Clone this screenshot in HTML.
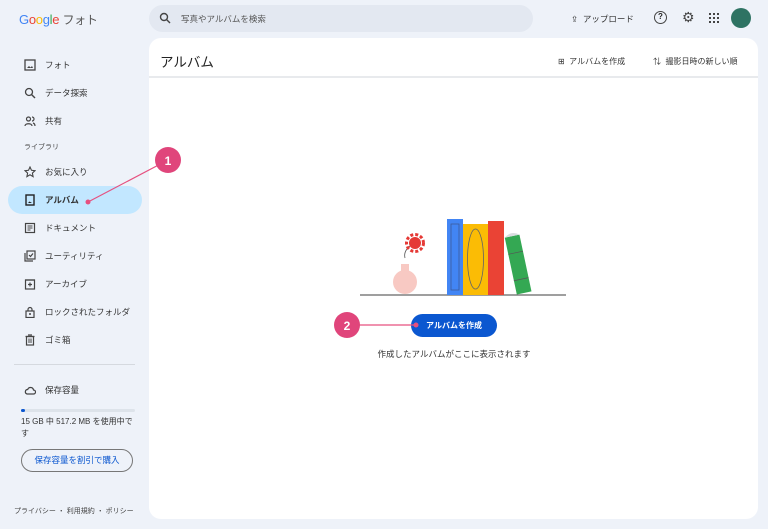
<!DOCTYPE html><html><head><meta charset="utf-8"><style>
*{margin:0;padding:0;box-sizing:border-box}
body{width:768px;height:529px;background:#eef2f9;font-family:"Liberation Sans","Noto Sans CJK JP",sans-serif;color:#1f1f1f;position:relative;overflow:hidden;font-size:9px}
.a{position:absolute}
.item{position:absolute;left:8px;width:134px;height:28px;display:flex;align-items:center;padding-left:16px;font-size:8.5px;color:#333}
.item svg{width:12px;height:12px;margin-right:9px}
.act{background:#c2e7ff;border-radius:14px;font-weight:bold}
</style></head><body>
<div class="a" style="left:19px;top:11px;font-size:13px;letter-spacing:-.3px"><span style="color:#4285f4">G</span><span style="color:#ea4335">o</span><span style="color:#fbbc05">o</span><span style="color:#4285f4">g</span><span style="color:#34a853">l</span><span style="color:#ea4335">e</span> <span style="color:#555;font-size:12px">フォト</span></div>
<div class="a" style="left:149px;top:5px;width:384px;height:27px;background:#e3e8f1;border-radius:14px"></div>
<svg class="a" style="left:159px;top:12px" width="12" height="12" viewBox="0 0 12 12"><circle cx="5" cy="5" r="3.5" fill="none" stroke="#444" stroke-width="1.4"/><path d="M7.5 7.5L11 11" stroke="#444" stroke-width="1.4"/></svg>
<div class="a" style="left:181px;top:13px;font-size:8.5px;color:#555">写真やアルバムを検索</div>
<div class="a" style="left:571px;top:13px;font-size:8.5px;color:#333">⇪&nbsp; アップロード</div>
<div class="a" style="left:654px;top:11px;width:13px;height:13px;border:1.4px solid #444;border-radius:50%;font-size:8px;text-align:center;line-height:10px;font-weight:bold">?</div>
<div class="a" style="left:682px;top:9px;font-size:14px;color:#444">⚙</div>
<svg class="a" style="left:709px;top:13px" width="10" height="10"><g fill="#444"><rect x="0" y="0" width="2" height="2"/><rect x="4" y="0" width="2" height="2"/><rect x="8" y="0" width="2" height="2"/><rect x="0" y="4" width="2" height="2"/><rect x="4" y="4" width="2" height="2"/><rect x="8" y="4" width="2" height="2"/><rect x="0" y="8" width="2" height="2"/><rect x="4" y="8" width="2" height="2"/><rect x="8" y="8" width="2" height="2"/></g></svg>
<div class="a" style="left:731px;top:8px;width:20px;height:20px;border-radius:50%;background:#2e7363"></div>

<div class="item" style="top:51px"><svg viewBox="0 0 12 12"><rect x="1" y="1" width="10" height="10" fill="none" stroke="#444" stroke-width="1.3"/><path d="M3 9l2-2 1.5 1.5L8 7l1 2z" fill="#444"/></svg>フォト</div>
<div class="item" style="top:79px"><svg viewBox="0 0 12 12"><circle cx="5" cy="5" r="3.5" fill="none" stroke="#444" stroke-width="1.3"/><path d="M7.5 7.5L11 11" stroke="#444" stroke-width="1.4"/></svg>データ探索</div>
<div class="item" style="top:107px"><svg viewBox="0 0 12 12"><circle cx="4.5" cy="4" r="2" fill="none" stroke="#444" stroke-width="1.2"/><path d="M1 11c0-3 7-3 7 0M8 2a2 2 0 010 4M9 8c1.5.5 2 1.5 2 3" fill="none" stroke="#444" stroke-width="1.2"/></svg>共有</div>
<div class="a" style="left:24px;top:142px;font-size:7px;color:#444">ライブラリ</div>
<div class="item" style="top:158px"><svg viewBox="0 0 12 12"><path d="M6 1l1.5 3.3 3.5.4-2.6 2.4.7 3.5L6 8.8 2.9 10.6l.7-3.5L1 4.7l3.5-.4z" fill="none" stroke="#444" stroke-width="1.1"/></svg>お気に入り</div>
<div class="item act" style="top:186px"><svg viewBox="0 0 12 12"><rect x="2" y="1" width="8" height="10" fill="none" stroke="#222" stroke-width="1.4"/><path d="M4 9l1.5-1.5L8 9z" fill="#222"/></svg>アルバム</div>
<div class="item" style="top:214px"><svg viewBox="0 0 12 12"><rect x="1.5" y="1.5" width="9" height="9" fill="none" stroke="#444" stroke-width="1.2"/><path d="M3.5 4h5M3.5 6h5M3.5 8h3" stroke="#444"/></svg>ドキュメント</div>
<div class="item" style="top:242px"><svg viewBox="0 0 12 12"><rect x="3" y="1" width="8" height="8" fill="none" stroke="#444" stroke-width="1.2"/><path d="M1 3v8h8M5 5l1.5 1.5L9 3.5" fill="none" stroke="#444" stroke-width="1.2"/></svg>ユーティリティ</div>
<div class="item" style="top:270px"><svg viewBox="0 0 12 12"><rect x="1.5" y="2" width="9" height="9" fill="none" stroke="#444" stroke-width="1.2"/><path d="M1 2h10M6 4.5v4M4 6.5h4" stroke="#444" stroke-width="1.2"/></svg>アーカイブ</div>
<div class="item" style="top:298px"><svg viewBox="0 0 12 12"><rect x="2" y="5" width="8" height="6.5" fill="none" stroke="#444" stroke-width="1.2"/><path d="M4 5V3.5a2 2 0 014 0V5" fill="none" stroke="#444" stroke-width="1.2"/><circle cx="6" cy="8" r="1" fill="#444"/></svg>ロックされたフォルダ</div>
<div class="item" style="top:326px"><svg viewBox="0 0 12 12"><path d="M1.5 2.5h9M4 1h4" stroke="#444" stroke-width="1.2"/><rect x="2.5" y="2.5" width="7" height="8.5" fill="none" stroke="#444" stroke-width="1.2"/><path d="M5 4.5v4.5M7 4.5v4.5" stroke="#444"/></svg>ゴミ箱</div>
<div class="a" style="left:14px;top:364px;width:121px;height:1px;background:#d5d9df"></div>
<div class="item" style="top:376px"><svg viewBox="0 0 12 12"><path d="M3 10h6.5a2 2 0 000-4 3 3 0 00-5.8-.5A2.3 2.3 0 003 10z" fill="none" stroke="#444" stroke-width="1.2"/></svg>保存容量</div>
<div class="a" style="left:21px;top:409px;width:114px;height:3px;background:#dde3ea;border-radius:2px"><div style="width:4px;height:3px;background:#0b57d0;border-radius:2px"></div></div>
<div class="a" style="left:21px;top:416px;width:115px;font-size:8px;line-height:12px;color:#333">15 GB 中 517.2 MB を使用中です</div>
<div class="a" style="left:21px;top:449px;width:112px;height:23px;border:1px solid #777;border-radius:12px;text-align:center;line-height:21px;font-size:8.5px;color:#0b57d0">保存容量を割引で購入</div>
<div class="a" style="left:14px;top:506px;font-size:7px;color:#444">プライバシー ・ 利用規約 ・ ポリシー</div>

<div class="a" style="left:149px;top:38px;width:609px;height:481px;background:#fff;border-radius:12px"></div>
<div class="a" style="left:160px;top:51px;font-size:13.5px;color:#222">アルバム</div>
<div class="a" style="left:149px;top:76px;width:609px;height:1.5px;background:#e8eaed"></div>
<div class="a" style="left:558px;top:56px;font-size:8px;color:#333">⊞&nbsp; アルバムを作成</div>
<div class="a" style="left:653px;top:56px;font-size:8px;color:#333">⇅&nbsp; 撮影日時の新しい順</div>

<svg class="a" style="left:340px;top:200px" width="240" height="110" viewBox="340 200 240 110">
<line x1="360" y1="295" x2="566" y2="295" stroke="#666" stroke-width="1.2"/>
<rect x="447" y="219" width="16" height="76" fill="#4285f4"/><rect x="451" y="224" width="8" height="66" fill="none" stroke="#3c5a99" stroke-width="0.8"/>
<rect x="463" y="224" width="25" height="71" fill="#fbbc05"/><ellipse cx="475.5" cy="259" rx="8" ry="30" fill="none" stroke="#5f6368" stroke-width="0.8"/>
<rect x="488" y="221" width="16" height="74" fill="#ea4335"/>
<g transform="rotate(-12 513 238)"><rect x="505" y="236" width="15" height="58" fill="#34a853"/><path d="M505 236q7.5-6 15 0z" fill="#dadce0"/><path d="M505 253h15M505 280h15" stroke="#555" stroke-width="0.7"/></g>
<path d="M405 258q-2 -8 8 -14" stroke="#555" fill="none" stroke-width="0.8"/>
<rect x="401" y="264" width="8" height="8" fill="#f8c9c3"/>
<circle cx="405" cy="282" r="12" fill="#f8c9c3"/>
<circle cx="415" cy="243" r="6" fill="#e53935"/><circle cx="415" cy="243" r="8.5" fill="none" stroke="#e53935" stroke-width="3" stroke-dasharray="3 2"/>
</svg>
<div class="a" style="left:411px;top:314px;width:86px;height:23px;border-radius:12px;background:#0b57d0;color:#fff;font-size:8px;font-weight:bold;text-align:center;line-height:23px">アルバムを作成</div>
<div class="a" style="left:340px;top:348px;width:228px;text-align:center;font-size:8.5px;color:#333">作成したアルバムがここに表示されます</div>

<svg class="a" style="left:0;top:0" width="768" height="529">
<line x1="88" y1="202" x2="168" y2="160" stroke="#e6507f" stroke-width="1.2"/><circle cx="88" cy="202" r="2.5" fill="#e6507f"/>
<circle cx="168" cy="160" r="13" fill="#e0457b"/><text x="168" y="165" fill="#fff" font-size="12" font-weight="bold" text-anchor="middle" font-family="Liberation Sans">1</text>
<line x1="347" y1="325" x2="415" y2="325" stroke="#e6507f" stroke-width="1.2"/><circle cx="416" cy="325" r="2.5" fill="#e6507f"/>
<circle cx="347" cy="325" r="13" fill="#e0457b"/><text x="347" y="330" fill="#fff" font-size="12" font-weight="bold" text-anchor="middle" font-family="Liberation Sans">2</text>
</svg>
</body></html>
